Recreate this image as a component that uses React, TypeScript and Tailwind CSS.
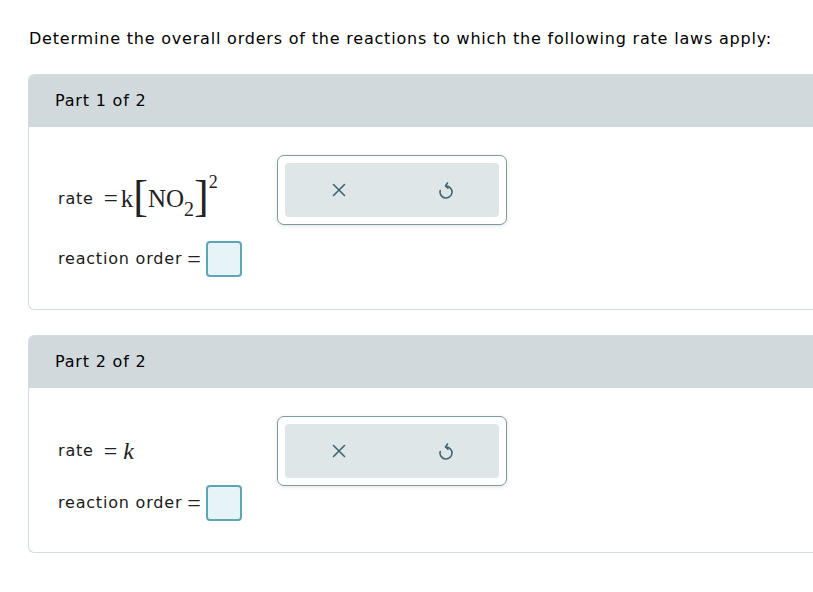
import React from 'react';

const sans = { fontFamily: '"DejaVu Sans", Verdana, sans-serif', letterSpacing: '0.8px' };
const serif = { fontFamily: '"Liberation Serif", "Times New Roman", serif' };

function XIcon() {
  return (
    <svg width="14" height="14" viewBox="0 0 14 14" fill="none" stroke="#3d6470" strokeWidth="1.6" strokeLinecap="round">
      <path d="M1.5 1.5 L12.5 12.5 M12.5 1.5 L1.5 12.5" />
    </svg>
  );
}

function ResetIcon() {
  return (
    <svg width="18" height="18" viewBox="0 0 18 18" fill="none" stroke="#3d6470" strokeWidth="1.6" strokeLinecap="round" strokeLinejoin="round">
      <path d="M9 5 A6 6 0 1 1 3.2 9.5" />
      <path d="M10.5 2 L8.5 5 L11 7.2" />
    </svg>
  );
}

function Tools() {
  return (
    <div className="w-[230px] h-[70px] rounded-[7px] border border-[#7f9aa3] bg-white p-[7px] shadow-[0_1px_4px_rgba(0,0,0,0.12)]">
      <div className="h-full rounded-[4px] bg-[#dfe6e8] flex items-center justify-around">
        <button className="w-[60px] h-[30px] flex items-center justify-center"><XIcon /></button>
        <button className="w-[60px] h-[30px] flex items-center justify-center"><ResetIcon /></button>
      </div>
    </div>
  );
}

function AnswerBox() {
  return <span className="inline-block w-[36px] h-[36px] rounded-[4px] border-2 border-[#5aa6b4] bg-[#e6f4f8] ml-[5px]" />;
}

function Part({ n, rate, pb }: { n: number; rate: React.ReactNode; pb: string }) {
  return (
    <section className="ml-[28px] border border-[#d5dcdf] border-r-0 rounded-l-[6px] overflow-hidden">
      <div className="h-[52px] bg-[#d1d9dc] flex items-center pl-[26px] text-[16px] text-black" style={sans}>
        Part {n} of 2
      </div>
      <div className={`flex pt-[28px] pl-[29px] ${pb}`}>
        <div className="w-[219px] shrink-0">{rate}</div>
        <Tools />
      </div>
    </section>
  );
}

function OrderRow() {
  return (
    <div className="flex items-center text-[16px] text-[#1a1a1a]">
      <span style={sans}>reaction order</span>
      <span className="ml-[5px] text-[24px] leading-none text-[#222]" style={serif}>=</span>
      <AnswerBox />
    </div>
  );
}

export default function App() {
  const rate1 = (
    <div className="flex flex-col gap-[22px] pt-[24px]">
      <div className="h-[40px] flex items-center text-[16px] text-[#1a1a1a]">
        <span style={sans}>rate</span>
        <span className="ml-[10px] text-[25px] flex items-center text-[#222]" style={serif}>
          <span className="text-[25px] mr-[3px]">=</span>
          <span>k</span>
          <span className="text-[44px] leading-none font-light -mt-[4px]">[</span>
          <span>NO</span>
          <span className="text-[20px] relative top-[10px]">2</span>
          <span className="text-[44px] leading-none font-light -mt-[4px]">]</span>
          <span className="text-[18px] relative -top-[17px]">2</span>
        </span>
      </div>
      <OrderRow />
    </div>
  );

  const rate2 = (
    <div className="flex flex-col gap-[22px] pt-[23px]">
      <div className="h-[24px] flex items-center text-[16px] text-[#1a1a1a]">
        <span style={sans}>rate</span>
        <span className="ml-[10px] text-[24px] text-[#222]" style={serif}>
          <span>=</span> <i>k</i>
        </span>
      </div>
      <OrderRow />
    </div>
  );

  return (
    <div className="w-[813px] h-[592px] bg-white overflow-hidden">
      <p className="pt-[28px] pl-[29px] text-[16px] leading-[22px] text-black" style={sans}>
        Determine the overall orders of the reactions to which the following rate laws apply:
      </p>
      <div className="mt-[24px]">
        <Part n={1} rate={rate1} pb="pb-[32px]" />
      </div>
      <div className="mt-[25px]">
        <Part n={2} rate={rate2} pb="pb-[31px]" />
      </div>
    </div>
  );
}
